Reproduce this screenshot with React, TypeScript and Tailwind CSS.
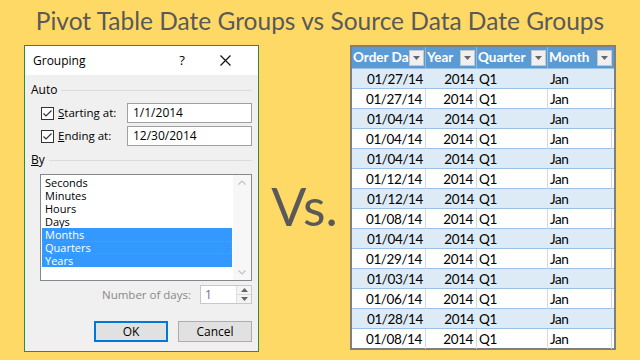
import React from "react";

const dates = [
  "01/27/14",
  "01/27/14",
  "01/04/14",
  "01/04/14",
  "01/04/14",
  "01/12/14",
  "01/12/14",
  "01/08/14",
  "01/04/14",
  "01/29/14",
  "01/03/14",
  "01/06/14",
  "01/28/14",
  "01/08/14",
];

const units = ["Seconds", "Minutes", "Hours", "Days", "Months", "Quarters", "Years"];

function CheckBox() {
  return (
    <svg width="13" height="13" viewBox="0 0 13 13" className="shrink-0">
      <rect x="0.5" y="0.5" width="12" height="12" fill="#fff" stroke="#333" />
      <path d="M2.5 6.5 L5 9 L10.5 3.5" fill="none" stroke="#333" strokeWidth="1.2" />
    </svg>
  );
}

function FilterButton() {
  return (
    <div className="flex h-[16px] w-[15px] shrink-0 items-center justify-center border border-[#c8c8c8] bg-[#f0f0f0]">
      <svg width="7" height="4" viewBox="0 0 7 4">
        <path d="M0 0 H7 L3.5 4 Z" fill="#666" />
      </svg>
    </div>
  );
}

function GroupLabel({ first, rest }: { first: string; rest: string }) {
  return (
    <div className="flex h-[16px] items-center gap-1">
      <span>
        <span className={first === "B" ? "underline" : ""}>{first}</span>
        {rest}
      </span>
      <div className="h-px flex-1 bg-[#dcdcdc]" />
    </div>
  );
}

function GroupingDialog() {
  return (
    <div className="flex h-[307px] w-[235px] shrink-0 flex-col border border-[#2e8b47] bg-[#f0f0f0] font-['Open_Sans',sans-serif] text-[11px] text-black">
      <div className="flex h-[29px] shrink-0 items-center bg-white pl-[8px] text-[12px]">
        <span className="flex-1">Grouping</span>
        <span className="w-[20px] text-center text-[13px]">?</span>
        <div className="flex w-[66px] justify-center">
          <svg width="11" height="11" viewBox="0 0 11 11">
            <path d="M0.5 0.5 L10.5 10.5 M10.5 0.5 L0.5 10.5" stroke="#111" strokeWidth="1.2" />
          </svg>
        </div>
      </div>
      <div className="flex flex-1 flex-col px-[6px]">
        <div className="mt-[7px] text-[12px]">
          <GroupLabel first="A" rest="uto" />
        </div>
        <div className="mt-[5px] flex h-[20px] items-center pl-[10px] text-[12px]">
          <CheckBox />
          <span className="ml-[4px] w-[69px] text-[11.5px]">
            <span className="underline">S</span>tarting at:
          </span>
          <div className="flex h-[20px] flex-1 items-center border border-[#a0a0a0] bg-white pl-[5px]">1/1/2014</div>
        </div>
        <div className="mt-[3px] flex h-[20px] items-center pl-[10px] text-[12px]">
          <CheckBox />
          <span className="ml-[4px] w-[69px] text-[11.5px]">
            <span className="underline">E</span>nding at:
          </span>
          <div className="flex h-[20px] flex-1 items-center border border-[#a0a0a0] bg-white pl-[5px]">12/30/2014</div>
        </div>
        <div className="mt-[6px] text-[12px]">
          <GroupLabel first="B" rest="y" />
        </div>
        <div className="ml-[9px] mt-[6px] flex h-[107px] border border-[#828790] bg-white">
          <div className="flex flex-1 flex-col p-px">
            {units.map((u) => {
              const sel = u === "Months" || u === "Quarters" || u === "Years";
              return (
                <div
                  key={u}
                  className={
                    u === "Quarters"
                      ? "flex h-[13px] items-center border border-dotted border-[#e07b24] bg-[#3399ff] pl-[2px] leading-[13px] text-white"
                      : sel
                        ? "flex h-[13px] items-center bg-[#3399ff] pl-[3px] leading-[13px] text-white"
                        : "flex h-[13px] items-center pl-[3px] leading-[13px]"
                  }
                >
                  {u}
                </div>
              );
            })}
          </div>
          <div className="flex w-[18px] flex-col items-center justify-between bg-[#f7f7f7] py-[5px]">
            <svg width="8" height="5" viewBox="0 0 8 5">
              <path d="M0.5 4.5 L4 1 L7.5 4.5" fill="none" stroke="#c2c2c2" strokeWidth="1.2" />
            </svg>
            <svg width="8" height="5" viewBox="0 0 8 5">
              <path d="M0.5 0.5 L4 4 L7.5 0.5" fill="none" stroke="#c2c2c2" strokeWidth="1.2" />
            </svg>
          </div>
        </div>
        <div className="mt-[4px] flex h-[19px] items-center justify-end">
          <span className="mr-[9px] text-[11.5px] text-[#8a8a8a]">Number of days:</span>
          <div className="flex h-[19px] w-[52px] border border-[#c8c8c8] bg-white">
            <span className="flex flex-1 items-center pl-[4px] text-[12px] text-[#7a6a9a]">1</span>
            <div className="flex w-[15px] flex-col border-l border-[#e0e0e0] bg-[#f4f4f4]">
              <div className="flex flex-1 items-center justify-center border-b border-[#d8d8d8]">
                <svg width="7" height="4" viewBox="0 0 7 4">
                  <path d="M0 4 H7 L3.5 0 Z" fill="#666" />
                </svg>
              </div>
              <div className="flex flex-1 items-center justify-center">
                <svg width="7" height="4" viewBox="0 0 7 4">
                  <path d="M0 0 H7 L3.5 4 Z" fill="#666" />
                </svg>
              </div>
            </div>
          </div>
        </div>
        <div className="mt-[17px] flex justify-end gap-[10px] text-[12px]">
          <div className="flex h-[21px] w-[74px] items-center justify-center border-2 border-[#0078d7] bg-[#e1e1e1]">OK</div>
          <div className="flex h-[21px] w-[74px] items-center justify-center border border-[#adadad] bg-[#e1e1e1]">Cancel</div>
        </div>
      </div>
    </div>
  );
}

function DataTable() {
  const cols = "grid grid-cols-[74px_51px_71px_66px]";
  return (
    <div className="w-[266px] shrink-0 border-2 border-[#7f7f7f] font-['Lato',sans-serif] text-[13.5px] text-black">
      <div className={`${cols} h-[21px] bg-[#5b9bd5] font-bold text-white`}>
        {["Order Da", "Year", "Quarter", "Month"].map((h, i) => (
          <div key={h} className={i < 3 ? "flex items-center border-r border-[#8cb8e0] pl-[1px] pr-px" : "flex items-center pl-[1px] pr-[2px]"}>
            <span className="flex-1 overflow-hidden whitespace-nowrap">{h}</span>
            <FilterButton />
          </div>
        ))}
      </div>
      {dates.map((d, i) => {
        const blue = i % 2 === 0;
        const line = blue ? "" : "border-r border-[#d9d9d9]";
        return (
          <div key={i} className={`${cols} h-[20px] border-t border-[#9bc2e6] tracking-[-0.4px] ${blue ? "bg-[#ddebf7]" : "bg-white"}`}>
            <div className={`flex items-center justify-end pr-[3px] ${line}`}>{d}</div>
            <div className={`flex items-center justify-end pr-[3px] ${line}`}>2014</div>
            <div className={`flex items-center pl-[2px] ${line}`}>Q1</div>
            <div className={`flex items-center pl-[2px] ${blue ? "" : "mr-[2px] border-r border-[#d9d9d9]"}`}>Jan</div>
          </div>
        );
      })}
    </div>
  );
}

export default function App() {
  return (
    <div className="flex h-[360px] w-[640px] flex-col overflow-hidden bg-[#ffd966]">
      <div className="flex h-[45px] shrink-0 items-center justify-center pb-[2px] font-['Lato',sans-serif] text-[24.5px] text-[#595959]">
        Pivot Table Date Groups vs Source Data Date Groups
      </div>
      <div className="flex items-start px-[24px]">
        <GroupingDialog />
        <div className="flex h-[307px] flex-1 items-center justify-center pt-[14px] font-['Lato',sans-serif] text-[52px] text-[#595959]">
          Vs.
        </div>
        <DataTable />
      </div>
    </div>
  );
}
